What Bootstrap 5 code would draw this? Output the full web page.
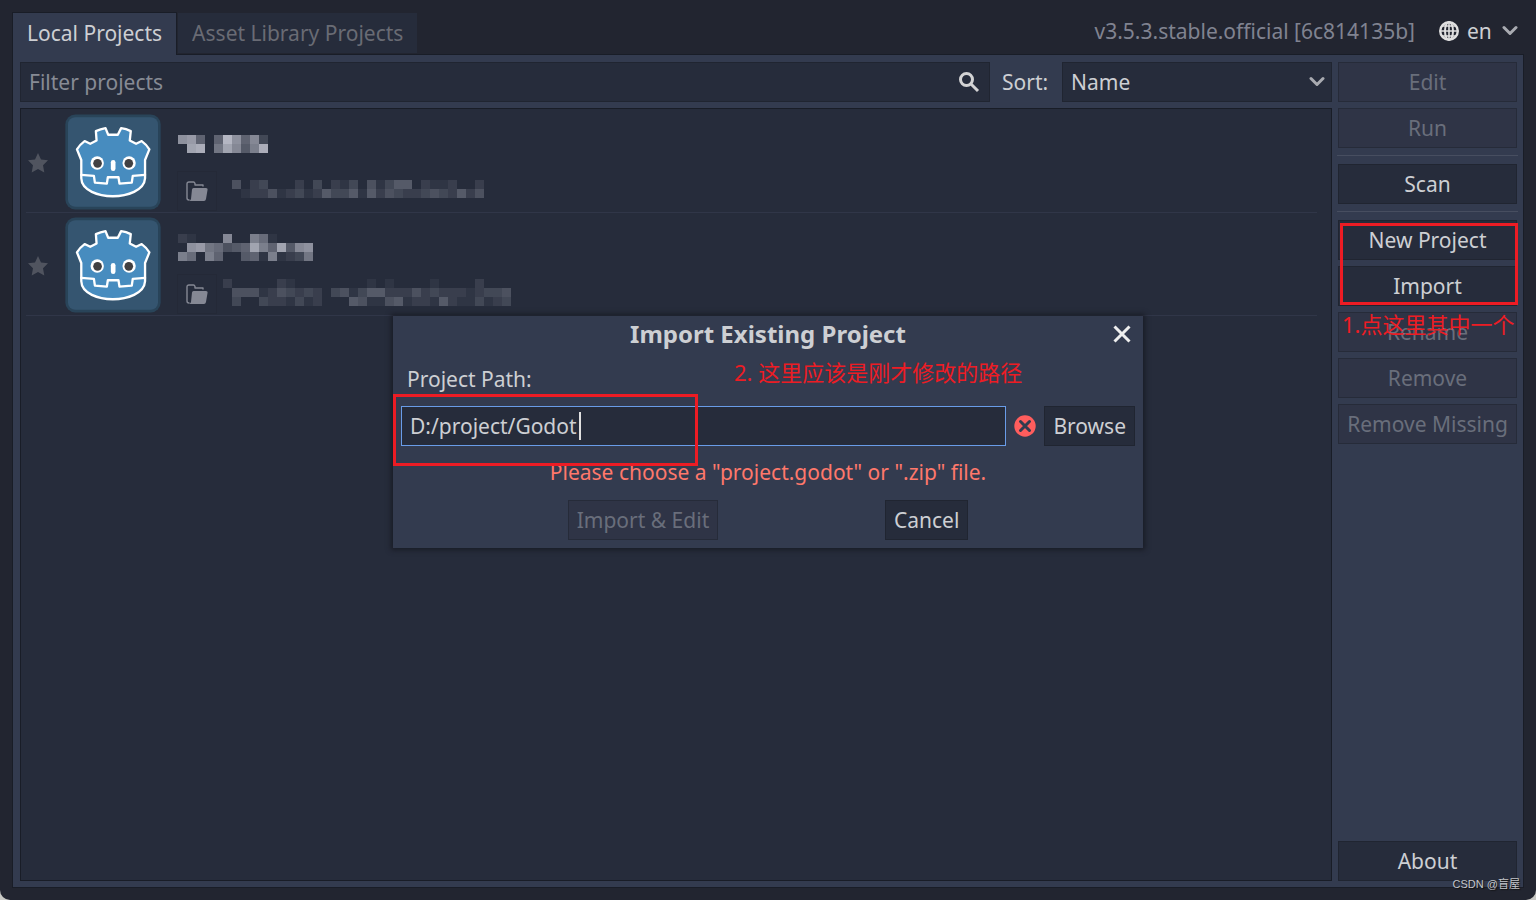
<!DOCTYPE html>
<html lang="en">
<head>
<meta charset="utf-8">
<meta name="viewport" content="width=device-width, initial-scale=1">
<title>Godot Engine - Project Manager</title>
<link href="https://cdn.jsdelivr.net/npm/bootstrap@5.3.0/dist/css/bootstrap.min.css" rel="stylesheet">
<style>
  :root {
    --base: #333b4f;
    --dark: #262c3b;
    --window: #222530;
    --line: #191d27;
    --edge: #202531;
    --ink: #cdcfd3;
    --mark-red: #ed1c24;
  }
  body { background: #c9c9c5; color: var(--ink); font: 21px/30px "Noto Sans", "Noto Sans CJK SC", sans-serif; }
  .window { background: var(--window); min-height: 100vh; padding: 12px; border-radius: 0 0 10px 10px; }
  .tabs { height: 42px; }
  .tab { border: 0; padding: 0 14px; color: #696b74; background: var(--dark); margin-top: 1px; height: 40px; }
  .tab-open { color: var(--ink); background: var(--base); border: 1px solid var(--line); border-bottom: 0; margin: 0 1px -1px 0; padding-bottom: 2px; height: 43px; position: relative; z-index: 1; }
  .header-tools { padding: 4px 6px 0 0; }
  .version { color: #808390; }
  .main-panel { background: var(--base); border: 1px solid var(--line); padding: 7px 6px 6px 7px; gap: 6px; }
  .list-side { gap: 6px; }
  .field, .tool { height: 40px; background: var(--dark); border: 1px solid var(--edge); border-radius: 0; color: var(--ink); }
  .field, .tool, .plain-input { padding-bottom: 1px; }
  .tool { padding: 0 8px 1px; font-size: 21px; line-height: 30px; }
  .tool:hover { background: #2b3244; border-color: var(--edge); color: #fff; }
  .tool:disabled { background: #2f3446; border-color: #262b39; color: #696e7b; opacity: 1; }
  .plain-input { background: transparent; border: 0; outline: 0; color: var(--ink); padding: 0; min-width: 0; }
  .plain-input::placeholder { color: #878b95; opacity: 1; }
  .picker { appearance: none; border-radius: 0; outline: 0; color: var(--ink); padding: 0 8px 1px;
    background: var(--dark) url("data:image/svg+xml,%3Csvg xmlns='http://www.w3.org/2000/svg' viewBox='0 0 16 12'%3E%3Cpath d='M2 2.500l6 6 6-6' fill='none' stroke='%23a9abb1' stroke-width='3' stroke-linecap='round' stroke-linejoin='round'/%3E%3C/svg%3E") no-repeat right 6px center / 16px 12px; }
  .sort-label { width: 48px; }
  .sort-picker { width: 270px; }
  .lang-picker { background-color: transparent; background-position: right 0 center; border: 0; width: 59px; height: 30px; }
  .projects { background: var(--dark); border: 1px solid var(--line); padding: 5px 14px 0 5px; }
  .project { height: 99px; padding-bottom: 1px; margin-bottom: 4px; border-bottom: 1px solid #303648; }
  .star { width: 24px; margin-right: 15px; }
  .folder { width: 40px; height: 40px; border: 1px solid #242937; background: transparent; padding: 0; }
  .sidebar { width: 179px; gap: 6px; }
  .new-group { gap: 6px; }
  .split { height: 4px; margin: 0 -1px; padding-top: 1px; }
  .split::before { content: ""; display: block; border-top: 1px solid #474e60; }
  .dialog { position: absolute; z-index: 5; left: 50%; top: 316px; transform: translateX(-50%); width: 750px; background: var(--base); padding: 0 8px 8px; box-shadow: 0 0 5px 2px #191c26; }
  .dialog-title { font-size: 24px; line-height: 36px; font-weight: 700; }
  .close-x { position: absolute; right: 10px; top: 7px; width: 22px; height: 22px; border: 0; padding: 0; background: transparent; }
  .path-label { padding: 12px 6px; }
  .path-field { border-color: #699ce8; }
  .caret-bar { width: 2px; height: 28px; background: #e0e0e0; left: 178px; top: 6px; position: absolute; }
  .warning-text { color: #ff786b; margin: 11px 0 13px; }
  .red-box { position: absolute; border: 3px solid var(--mark-red); pointer-events: none; }
  .red-note { position: absolute; color: var(--mark-red); font-size: 22px; white-space: nowrap; pointer-events: none; }
  .box-path { left: 0; top: 78px; width: 305px; height: 72px; }
  .note-path { left: 341px; top: 41px; }
  .box-new { left: 2px; right: -1px; top: 3px; height: 82px; }
  .note-new { left: 4px; top: 89px; z-index: 2; }
  .watermark { position: absolute; right: 16px; bottom: 7px; font: 11px/18px "Liberation Sans", "Noto Sans CJK SC", sans-serif; color: #c4c6ca; text-shadow: 1px 1px 1px #111; }
  svg { display: block; flex: none; }
</style>
</head>
<body>
<svg class="d-none" aria-hidden="true">
  <symbol id="robot" viewBox="14 12 289 288">
    <rect x="15" y="13" width="287" height="286" rx="30" fill="#294459"/>
    <rect x="23" y="21" width="271" height="270" rx="22" fill="#355570"/>
    <g stroke="#fff" stroke-width="7" stroke-linejoin="round" stroke-linecap="round">
      <path fill="#478cbf" d="M63 150V205C64 242 115 259 158 259S253 242 255 205V150L268 118Q259 103 245 93L228 101 209 91 212 63Q198 56 183 54L173 74H144L136 54Q121 57 107 63L109 91 90 101 73 93Q59 103 50 118Z"/>
      <path fill="none" d="M63 195l38 3 3 20 36 3 3-19h32l3 19 37-3 3-20 37-3"/>
    </g>
    <g fill="#fff"><circle cx="111" cy="159" r="20"/><circle cx="207" cy="159" r="20"/><rect x="152" y="150" width="14" height="33" rx="7"/></g>
    <g fill="#414042"><circle cx="112" cy="160" r="13"/><circle cx="206" cy="160" r="13"/></g>
  </symbol>
  <symbol id="star" viewBox="0 0 22 22"><path fill="#50545f" d="M11 1l3 6.500 7 .8-5 5 1.300 7.200L11 17l-6.300 3.500L6 13.300l-5-5L8 7.500z"/></symbol>
  <symbol id="folder" viewBox="0 0 22 22">
    <path fill="none" stroke="#858894" stroke-width="1.400" stroke-linejoin="round" stroke-linecap="round" d="M17 6V5H9V3.500Q8.500 2 7.500 2H3Q1 2 1 4V18Q1 20 3 20"/>
    <path fill="#858894" d="M7.500 8H20q1.800 0 1.600 1.600L20 19q-.4 2-2 2H3q1.500-.3 2-2L6 9.500Q6.200 8 7.500 8z"/>
  </symbol>
</svg>

<div class="window d-flex flex-column position-relative">
  <header class="tabs d-flex align-items-start">
    <button class="tab tab-open" type="button">Local Projects</button>
    <button class="tab" type="button">Asset Library Projects</button>
    <div class="header-tools ms-auto d-flex align-items-center">
      <a class="version text-decoration-none" href="#">v3.5.3.stable.official [6c814135b]</a>
      <label class="d-flex align-items-center ms-4" for="lang" aria-label="Language">
        <svg width="20" height="20" viewBox="0 0 20 20" fill="none" stroke="#e0e0e0" stroke-width="2.400"><circle cx="10" cy="10" r="8.800"/><ellipse cx="10" cy="10" rx="4" ry="9" stroke-width="2"/><path d="M1 10h18M10 1v18M3 5h14M3 15h14" stroke-width="1.600"/></svg>
      </label>
      <select class="picker lang-picker" id="lang"><option>en</option></select>
    </div>
  </header>

  <main class="main-panel d-flex flex-grow-1">
    <section class="list-side d-flex flex-column flex-grow-1">
      <div class="d-flex align-items-center">
        <div class="field d-flex align-items-center flex-grow-1 px-2 me-2">
          <input class="plain-input flex-grow-1" type="text" placeholder="Filter projects" aria-label="Filter projects">
          <svg width="24" height="24" viewBox="0 0 24 24" fill="none" stroke="#d3d3d4" stroke-width="3"><circle cx="9.500" cy="9.500" r="6"/><path d="M14 14l7 7"/></svg>
        </div>
        <label class="sort-label ms-1 me-2" for="sort">Sort:</label>
        <select class="field picker sort-picker ms-1" id="sort"><option>Name</option><option>Path</option><option>Last Modified</option></select>
      </div>
      <div class="projects flex-grow-1">
        <article class="project d-flex">
          <svg class="star align-self-center" width="24" height="22"><use href="#star"/></svg>
          <svg width="96" height="96"><use href="#robot"/></svg>
          <div class="ms-3 d-flex flex-column justify-content-between">
            <svg class="mosaic mt-3" width="150" height="36" data-x="1" data-y="5" data-rows="bc606fb6a3,0de08da59e"></svg>
            <div class="d-flex">
              <button class="folder d-flex align-items-center justify-content-center" type="button" aria-label="Show in file manager"><svg width="22" height="22"><use href="#folder"/></svg></button>
              <svg class="mosaic" width="300" height="40" data-x="15" data-y="9" data-rows="4023000203021304135502112002,0122412312533515243223432524"></svg>
            </div>
          </div>
        </article>
        <article class="project d-flex">
          <svg class="star align-self-center" width="24" height="22"><use href="#star"/></svg>
          <svg width="96" height="96"><use href="#robot"/></svg>
          <div class="ms-3 d-flex flex-column justify-content-between">
            <svg class="mosaic mt-3" width="150" height="36" data-x="1" data-y="1" data-rows="21000a009710000,0bc87456d96d5ab,970960056191238"></svg>
            <div class="d-flex">
              <button class="folder d-flex align-items-center justify-content-center" type="button" aria-label="Show in file manager"><svg width="22" height="22"><use href="#folder"/></svg></button>
              <svg class="mosaic" width="300" height="40" data-x="6" data-y="5" data-rows="20000021000000001010000100002000,04441243232034135522242322212334,03003221312000541145122152113123"></svg>
            </div>
          </div>
        </article>
      </div>
    </section>

    <aside class="sidebar d-flex flex-column flex-shrink-0">
      <button class="btn tool" type="button" disabled>Edit</button>
      <button class="btn tool" type="button" disabled>Run</button>
      <div class="split"></div>
      <button class="btn tool" type="button">Scan</button>
      <div class="split"></div>
      <div class="new-group position-relative d-flex flex-column">
        <button class="btn tool" type="button">New Project</button>
        <button class="btn tool" type="button">Import</button>
        <div class="red-box box-new"></div>
        <div class="red-note note-new" lang="zh">1.点这里其中一个</div>
      </div>
      <button class="btn tool" type="button" disabled>Rename</button>
      <button class="btn tool" type="button" disabled>Remove</button>
      <button class="btn tool text-nowrap" type="button" disabled>Remove Missing</button>
      <button class="btn tool mt-auto" type="button">About</button>
    </aside>
  </main>

  <section class="dialog" role="dialog" aria-labelledby="dlg-title">
    <h1 class="dialog-title text-center m-0" id="dlg-title">Import Existing Project</h1>
    <button class="close-x" type="button" aria-label="Close"><svg width="22" height="22" viewBox="0 0 22 22"><path d="M3.500 3.500l15 15M18.500 3.500l-15 15" stroke="#eee" stroke-width="3"/></svg></button>
    <label class="path-label d-block" for="path">Project Path:</label>
    <div class="d-flex align-items-center">
      <div class="position-relative flex-grow-1">
        <input class="field path-field w-100 px-2 d-block" id="path" type="text" value="D:/project/Godot">
        <span class="caret-bar"></span>
      </div>
      <svg class="mx-2" width="22" height="22" viewBox="0 0 22 22"><circle cx="11" cy="11" r="10.700" fill="#ff5d5d"/><path d="M6.500 6.500l9 9M15.500 6.500l-9 9" stroke="#333b4f" stroke-width="3" stroke-linecap="round"/></svg>
      <button class="btn tool" type="button">Browse</button>
    </div>
    <p class="warning-text text-center">Please choose a "project.godot" or ".zip" file.</p>
    <div class="d-flex justify-content-evenly">
      <button class="btn tool" type="button" disabled>Import &amp; Edit</button>
      <button class="btn tool" type="button">Cancel</button>
    </div>
    <div class="red-box box-path"></div>
    <div class="red-note note-path" lang="zh">2. 这里应该是刚才修改的路径</div>
  </section>
  <div class="watermark">CSDN @盲屋</div>
</div>
<script>
  // Redacted names and paths: each hex digit is the brightness of one 9px cell.
  const low = [38, 44, 59], high = [180, 182, 194];
  document.querySelectorAll('svg.mosaic').forEach(svg => {
    svg.dataset.rows.split(',').forEach((row, r) => {
      [...row].forEach((digit, c) => {
        const t = parseInt(digit, 16) / 15;
        if (!t) return;
        const cell = document.createElementNS('http://www.w3.org/2000/svg', 'rect');
        cell.setAttribute('x', +svg.dataset.x + c * 9);
        cell.setAttribute('y', +svg.dataset.y + r * 9);
        cell.setAttribute('width', 9);
        cell.setAttribute('height', 9);
        cell.setAttribute('fill', `rgb(${low.map((v, i) => Math.round(v + (high[i] - v) * t))})`);
        svg.append(cell);
      });
    });
  });
</script>
<script src="https://cdn.jsdelivr.net/npm/bootstrap@5.3.0/dist/js/bootstrap.bundle.min.js"></script>
</body>
</html>
